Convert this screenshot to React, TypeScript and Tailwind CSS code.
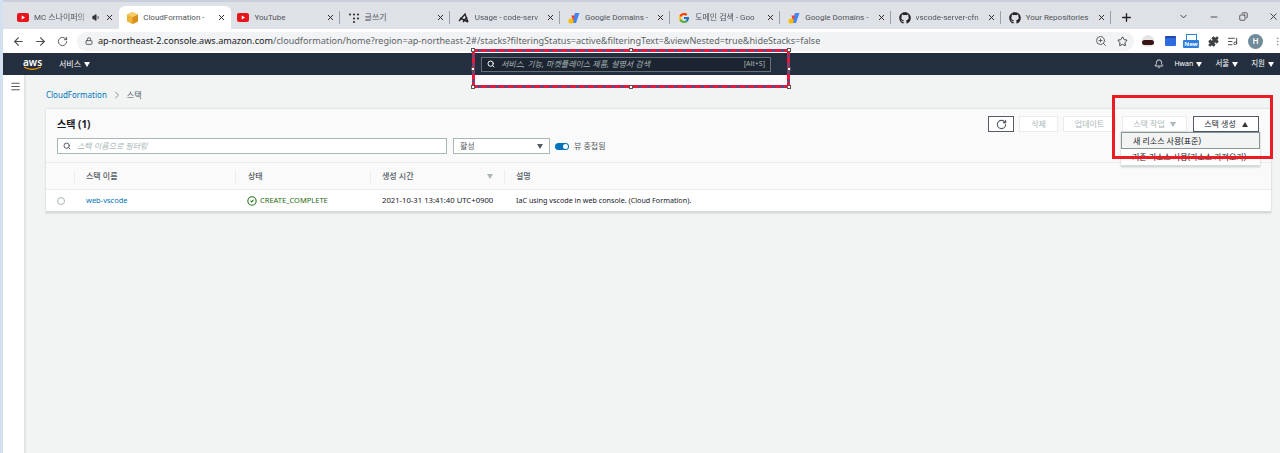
import { ArrowLeft, ArrowRight, RotateCw, Lock, ZoomIn, Star, Puzzle, ListMusic, X, Plus, ChevronDown, Minus, Copy, Bell, Search, CheckCircle2, Menu, ChevronRight, Volume1, MoreVertical } from "lucide-react";
import { FaGithub } from "react-icons/fa";
import { FcGoogle } from "react-icons/fc";

const krFont = "font-['Noto_Sans','Noto_Sans_CJK_KR',sans-serif]";

const YouTubeIcon = () => (
  <svg width="12" height="9" viewBox="0 0 12 9" className="shrink-0">
    <rect width="12" height="9" rx="2" fill="#e8141c" />
    <path d="M4.7 2.4 8 4.5 4.7 6.6z" fill="#fff" />
  </svg>
);

const CubeIcon = () => (
  <svg width="11" height="12" viewBox="0 0 11 12" className="shrink-0">
    <path d="M5.5 0 11 2.5v7L5.5 12 0 9.5v-7z" fill="#f0b43c" />
    <path d="M5.5 5 11 2.5v7L5.5 12z" fill="#d98f1e" />
    <path d="M5.5 0 11 2.5 5.5 5 0 2.5z" fill="#f7cd6a" />
  </svg>
);

const DomainsIcon = () => (
  <svg width="12" height="12" viewBox="0 0 12 12" className="shrink-0">
    <path d="M7 1h4.5L8 11H4z" fill="#4285f4" />
    <path d="M3.5 3.5H7L5 9.5z" fill="#ea4335" />
    <circle cx="3" cy="9" r="2.6" fill="#fbbc05" />
  </svg>
);

const TistoryIcon = () => (
  <svg width="12" height="12" viewBox="0 0 12 12" className="shrink-0" fill="#333">
    <circle cx="2" cy="2.5" r="1.1" />
    <circle cx="6" cy="2.5" r="1.1" />
    <circle cx="10" cy="2.5" r="1.1" />
    <circle cx="6" cy="6.5" r="1.1" />
    <circle cx="6" cy="10" r="1.1" />
    <circle cx="10" cy="6.5" r="1.1" />
  </svg>
);

const UsageIcon = () => (
  <svg width="12" height="12" viewBox="0 0 12 12" className="shrink-0" fill="none" stroke="#222" strokeWidth="1.4">
    <path d="M1 9 7 2l3 8M2 6l8 4M5 10l4-5" />
  </svg>
);

const tabs = [
  { title: "MC 스나이퍼의", icon: <YouTubeIcon />, sound: true, fade: true },
  { title: "CloudFormation -", icon: <CubeIcon />, active: true },
  { title: "YouTube", icon: <YouTubeIcon /> },
  { title: "글쓰기", icon: <TistoryIcon /> },
  { title: "Usage - code-serv", icon: <UsageIcon />, fade: true },
  { title: "Google Domains -", icon: <DomainsIcon /> },
  { title: "도메인 검색 - Goo", icon: <FcGoogle size={12} className="shrink-0" />, fade: true },
  { title: "Google Domains -", icon: <DomainsIcon /> },
  { title: "vscode-server-cfn", icon: <FaGithub size={12} className="shrink-0 text-[#222]" />, fade: true },
  { title: "Your Repositories", icon: <FaGithub size={12} className="shrink-0 text-[#222]" /> },
];

const Caret = ({ className = "" }: { className?: string }) => (
  <span className={`inline-block h-0 w-0 border-x-[3.5px] border-t-[5px] border-x-transparent border-t-current ${className}`} />
);

const Tab = ({ tab, next }: { tab: (typeof tabs)[number]; next?: boolean }) => (
  <div className={`relative flex h-[23px] shrink-0 items-center pl-[8px] pr-[5px] ${tab.active ? "z-10 -mr-[1.8px] w-[112px] rounded-t-md bg-white" : "w-[110.2px]"}`}>
    {tab.icon}
    <span
      className={`ml-[5px] min-w-0 flex-1 whitespace-nowrap font-['Roboto','Noto_Sans_CJK_KR',sans-serif] text-[8px] text-[#50545a] ${
        tab.fade ? "[mask-image:linear-gradient(to_right,black_85%,transparent)]" : ""
      }`}
    >
      {tab.title}
    </span>
    {tab.sound && <Volume1 size={9} className="mx-[4px] shrink-0 fill-[#333] text-[#333]" />}
    <X size={9} strokeWidth={2.5} className="shrink-0 text-[#222]" />
    {next && <span className="absolute right-0 top-[5px] h-[13px] w-px bg-[#9aa0a6]" />}
  </div>
);

const Btn = ({ label, w }: { label: string; w: string }) => (
  <div className={`flex h-[16px] items-center justify-center border border-[#eaeded] bg-white text-[8px] text-[#aab7b8] ${w}`}>{label}</div>
);

const Handle = ({ pos }: { pos: string }) => (
  <span className={`absolute h-[4px] w-[4px] border border-[#555] bg-white ${pos}`} />
);

const App = () => {
  return (
    <div className={`relative h-[453px] w-[1280px] overflow-hidden bg-white ${krFont}`}>
      {/* browser chrome */}
      <div className="h-[2px] bg-[#c9d0dc]" />
      <div className="flex h-[27px] items-end bg-[#dee1e6] pl-[9px]">
        {tabs.map((t, i) => (
          <Tab key={i} tab={t} next={i >= 2} />
        ))}
        <Plus size={13} strokeWidth={2.5} className="mb-[5px] ml-[9px] shrink-0 text-[#222]" />
        <div className="mb-[7px] ml-[45px] flex items-center gap-[20px] text-[#333]">
          <ChevronDown size={11} className="shrink-0" />
          <Minus size={10} className="shrink-0" />
          <Copy size={9} className="shrink-0 -scale-x-100" />
          <X size={11} className="shrink-0" />
        </div>
      </div>
      <div className="flex h-[24px] items-center bg-white pl-[12px]">
        <ArrowLeft size={13} className="shrink-0 text-[#4a4d50]" />
        <ArrowRight size={13} className="ml-[9px] shrink-0 text-[#4a4d50]" />
        <RotateCw size={11} className="ml-[10px] shrink-0 text-[#4a4d50]" />
        <div className="ml-[9px] flex h-[19px] w-[1057px] shrink-0 items-center rounded-full bg-[#f1f3f4] pl-[8px] pr-[6px]">
          <Lock size={8} strokeWidth={3} className="text-[#5f6368]" />
          <span className="ml-[5px] flex-1 whitespace-nowrap text-[9.1px] text-[#202124]">
            ap-northeast-2.console.aws.amazon.com
            <span className="text-[#5f6368]">/cloudformation/home?region=ap-northeast-2#/stacks?filteringStatus=active&amp;filteringText=&amp;viewNested=true&amp;hideStacks=false</span>
          </span>
          <ZoomIn size={12} className="text-[#5f6368]" />
          <Star size={11} className="ml-[10px] text-[#333]" />
        </div>
        <div className="flex shrink-0 items-center">
          <div className="relative ml-[8px] h-[12px] w-[12px] rounded-full bg-[#e4e4e4]">
            <span className="absolute inset-x-0 top-[5px] h-[5px] rounded-sm bg-[#3a1414]" />
          </div>
          <div className="ml-[11px] h-[10px] w-[11px] rounded-[1px] border-t-2 border-[#1f4aa8] bg-[#2e6ae0]" />
          <div className="relative ml-[7px] h-[14px] w-[16px]">
            <div className="mx-auto h-[8px] w-[11px] border border-[#2e7fd0] bg-white" />
            <span className="absolute bottom-0 left-0 right-0 rounded-[1px] bg-[#2e7fe0] text-center text-[6px] font-bold leading-[8px] text-white">New</span>
          </div>
          <Puzzle size={11} className="ml-[9px] fill-[#3c4043] text-[#3c4043]" />
          <ListMusic size={11} className="ml-[8px] text-[#3c4043]" />
          <div className="ml-[10px] flex h-[15px] w-[15px] items-center justify-center rounded-full bg-[#6f8a99] text-[8px] font-semibold text-white">H</div>
          <MoreVertical size={11} className="ml-[9px] text-[#9aa0a6]" />
        </div>
      </div>

      {/* aws top nav */}
      <div className="flex h-[22px] items-center bg-[#232f3e] pl-[23px] pr-[6px] text-white">
        <div className="flex w-[458px] items-center">
          <div className="relative h-[14px] w-[19px]">
            <span className="block text-center text-[10px] font-semibold leading-[10px]">aws</span>
            <svg width="19" height="5" viewBox="0 0 19 5" className="absolute bottom-0 left-0">
              <path d="M1 1c5 3 11 3 17 0" fill="none" stroke="#f90" strokeWidth="1.2" />
            </svg>
          </div>
          <span className="ml-[17px] text-[8px]">서비스</span>
          <Caret className="ml-[3px]" />
        </div>
        <div className="flex h-[15px] w-[290px] items-center justify-between border border-[#687078] bg-[#1b2430] pl-[5px] pr-[5px]">
          <div className="flex items-center">
            <Search size={8} strokeWidth={3} />
            <span className="ml-[6px] text-[8px] italic text-[#aab7b8]">서비스, 기능, 마켓플레이스 제품, 설명서 검색</span>
          </div>
          <span className="text-[7px] text-[#aab7b8]">[Alt+S]</span>
        </div>
        <div className="ml-auto flex items-center text-[7.5px]">
          <Bell size={10} />
          <span className="ml-[10px] text-[7px]">Hwan</span>
          <Caret className="ml-[3px]" />
          <span className="ml-[13px]">서울</span>
          <Caret className="ml-[3px]" />
          <span className="ml-[13px]">지원</span>
          <Caret className="ml-[3px]" />
        </div>
      </div>

      {/* console body */}
      <div className="flex h-[378px]">
        <div className="w-[26px] shrink-0 border-r-2 border-[#e3e5e5] bg-white pl-[10px] pt-[6px]">
          <Menu size={11} strokeWidth={2.5} className="text-[#545b64]" />
        </div>
        <div className="flex-1 bg-[#f2f3f3] pl-[20px] pr-[9px] pt-[14px]">
          <div className="flex h-[12px] items-center text-[8px]">
            <span className="text-[#0073bb]">CloudFormation</span>
            <ChevronRight size={12} strokeWidth={1.5} className="ml-[4px] text-[#687078]" />
            <span className="ml-[4px] text-[#545b64]">스택</span>
          </div>
          <div className="mt-[8px] border-b-2 border-[#d5dbdb] bg-white shadow-[0_0_2px_rgba(0,28,36,0.2)]">
            <div className="border-b border-[#eaeded] bg-[#fafafa] pb-[8px] pl-[11px] pr-[12px] pt-[7px]">
              <div className="flex h-[16px] items-center justify-between">
                <span className="text-[10px] font-bold text-[#16191f]">스택 (1)</span>
                <div className="flex items-center gap-[5px]">
                  <div className="flex h-[16px] w-[26px] items-center justify-center border border-[#545b64] bg-white">
                    <RotateCw size={11} strokeWidth={2.5} className="text-[#545b64]" />
                  </div>
                  <Btn label="삭제" w="w-[39px]" />
                  <Btn label="업데이트" w="w-[53px]" />
                  <div className="ml-[1px] flex h-[16px] w-[65px] items-center justify-center gap-[5px] border border-[#eaeded] bg-white text-[8px] text-[#aab7b8]">
                    스택 작업 <Caret />
                  </div>
                  <div className="ml-[1px] flex h-[16px] w-[66px] items-center justify-center gap-[6px] border border-[#545b64] bg-white text-[8px] font-medium text-[#545b64]">
                    스택 생성 <span className="inline-block h-0 w-0 border-x-[3.5px] border-b-[5px] border-x-transparent border-b-[#333]" />
                  </div>
                </div>
              </div>
              <div className="mt-[6px] flex h-[16px] items-center">
                <div className="flex h-[16px] w-[390px] items-center border border-[#aab7b8] bg-white pl-[5px]">
                  <Search size={8} strokeWidth={3} className="text-[#545b64]" />
                  <span className="ml-[6px] text-[8px] italic text-[#aab7b8]">스택 이름으로 필터링</span>
                </div>
                <div className="ml-[6px] flex h-[16px] w-[97px] items-center justify-between border border-[#aab7b8] bg-white pl-[6px] pr-[6px] text-[8px] text-[#545b64]">
                  활성 <Caret className="text-[#545b64]" />
                </div>
                <div className="ml-[5px] flex h-[7px] w-[14px] items-center justify-end rounded-full bg-[#0073bb] pr-[1px]">
                  <span className="h-[5px] w-[5px] rounded-full bg-white" />
                </div>
                <span className="ml-[5px] text-[8px] text-[#545b64]">뷰 중첩됨</span>
              </div>
            </div>
            <div className="grid h-[27px] grid-cols-[29px_161px_135px_134px_1fr] items-center border-b border-[#eaeded] bg-[#fafafa] text-[8px] font-medium text-[#545b64]">
              <span className="h-[13px] border-r border-[#eaeded]" />
              <div className="flex h-[13px] items-center border-r border-[#eaeded] pl-[11px]">스택 이름</div>
              <div className="flex h-[13px] items-center border-r border-[#eaeded] pl-[12px]">상태</div>
              <div className="flex h-[13px] items-center justify-between border-r border-[#eaeded] pl-[11px] pr-[11px]">
                생성 시간 <Caret className="text-[#aab7b8]" />
              </div>
              <div className="pl-[11px]">설명</div>
            </div>
            <div className="grid h-[21px] grid-cols-[29px_161px_135px_134px_1fr] items-center bg-white text-[7.5px] text-[#16191f]">
              <span className="ml-[11px] h-[8px] w-[8px] rounded-full border border-[#aab7b8]" />
              <span className="pl-[11px] text-[#0073bb]">web-vscode</span>
              <div className="flex items-center pl-[11px] text-[#1d6b10]">
                <CheckCircle2 size={10} strokeWidth={2.5} className="mr-[3px]" />
                CREATE_COMPLETE
              </div>
              <span className="pl-[11px] text-[7.7px]">2021-10-31 13:41:40 UTC+0900</span>
              <span className="pl-[11px] text-[7.2px]">IaC using vscode in web console. (Cloud Formation).</span>
            </div>
          </div>
        </div>
      </div>

      {/* open dropdown */}
      <div className="absolute left-[1121px] top-[132px] h-[35px] w-[139px] border-b-2 border-[#d5dbdb] bg-white text-[8px] text-[#16191f] shadow-[0_0_2px_rgba(0,28,36,0.25)]">
        <div className="flex h-[17px] items-center border border-[#879596] bg-[#f2f3f3] pl-[11px]">새 리소스 사용(표준)</div>
        <div className="flex h-[16px] items-center pl-[11px]">기존 리소스 사용(리소스 가져오기)</div>
      </div>

      {/* window edge */}
      <div className="absolute left-0 top-0 h-full w-[3px] bg-[#d3e0f0]" />

      {/* screenshot annotations */}
      <div className="absolute left-[475px] top-[75px] h-[11px] w-[312px] bg-[#fbfbfb]" />
      <div className="absolute left-[472px] top-[49px] h-[39px] w-[318px] border-[3px] border-[#5a4a8c]" />
      <div className="absolute left-[472px] top-[49px] h-[39px] w-[318px] border-[3px] border-dashed border-[#e8183c]">
        <Handle pos="-left-[4px] -top-[4px]" />
        <Handle pos="left-[154px] -top-[4px]" />
        <Handle pos="-right-[4px] -top-[4px]" />
        <Handle pos="-left-[4px] top-[15px]" />
        <Handle pos="-right-[4px] top-[15px]" />
        <Handle pos="-left-[4px] -bottom-[4px]" />
        <Handle pos="left-[154px] -bottom-[4px]" />
        <Handle pos="-right-[4px] -bottom-[4px]" />
      </div>
      <div className="absolute left-[1112px] top-[95px] h-[64px] w-[161px] border-[3px] border-[#ea1c24]" />
    </div>
  );
};

export default App;
